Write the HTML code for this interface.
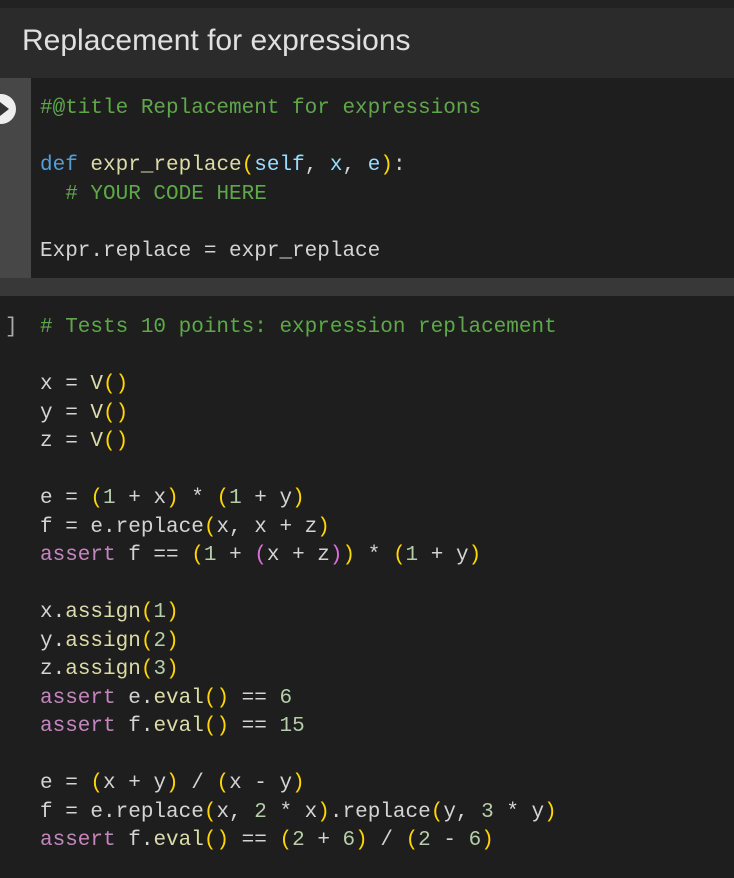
<!DOCTYPE html>
<html><head><meta charset="utf-8"><style>
body{margin:0;width:734px;height:878px;background:#1e1e1e;overflow:hidden;position:relative;font-family:"Liberation Mono",monospace}
.top{position:absolute;left:0;top:0;width:734px;height:8px;background:#222}
.title{position:absolute;left:0;top:8px;width:734px;height:70px;background:#2b2b2b;color:#e0e0e0;font-family:"Liberation Sans",sans-serif;font-size:30px;}
.title span{position:absolute;left:22px;top:16px}
.gut{position:absolute;left:0;top:78px;width:31px;height:200px;background:#474747}
.run{position:absolute;left:-14px;top:94px;width:30px;height:30px;border-radius:50%;background:#eee}
.run:after{content:"";position:absolute;left:14px;top:8px;border-left:9px solid #333;border-top:7px solid transparent;border-bottom:7px solid transparent}
.c1{position:absolute;left:31px;top:78px;width:703px;height:200px;background:#1e1e1e}
.band{position:absolute;left:0;top:278px;width:734px;height:18px;background:#383838}
pre{position:absolute;margin:0;font-family:"Liberation Mono",monospace;font-size:21px;line-height:28.5px;color:#d4d4d4}
.cm{color:#5ea84a}.kw{color:#569cd6}.fn{color:#dcdcaa}.pa{color:#9cdcfe}.p{color:#ffd700}.n{color:#b5cea8}.as{color:#c586c0}.p2{color:#da70d6}
.br{position:absolute;left:5px;top:314px;color:#aaa;font-size:21px;line-height:28.5px}
</style></head><body>
<div class="top"></div>
<div class="title"><span>Replacement for expressions</span></div>
<div class="gut"></div>
<div class="c1"></div>
<div class="run"></div>
<pre style="left:40px;top:95px"><span class="cm">#@title Replacement for expressions</span>

<span class="kw">def</span> <span class="fn">expr_replace</span><span class="p">(</span><span class="pa">self</span>, <span class="pa">x</span>, <span class="pa">e</span><span class="p">)</span>:
  <span class="cm"># YOUR CODE HERE</span>

Expr.replace = expr_replace</pre>
<div class="band"></div>
<div class="br">]</div>
<pre style="left:40px;top:314px"><span class="cm"># Tests 10 points: expression replacement</span>

x = <span class="fn">V</span><span class="p">()</span>
y = <span class="fn">V</span><span class="p">()</span>
z = <span class="fn">V</span><span class="p">()</span>

e = <span class="p">(</span><span class="n">1</span> + x<span class="p">)</span> * <span class="p">(</span><span class="n">1</span> + y<span class="p">)</span>
f = e.replace<span class="p">(</span>x, x + z<span class="p">)</span>
<span class="as">assert</span> f == <span class="p">(</span><span class="n">1</span> + <span class="p2">(</span>x + z<span class="p2">)</span><span class="p">)</span> * <span class="p">(</span><span class="n">1</span> + y<span class="p">)</span>

x.<span class="fn">assign</span><span class="p">(</span><span class="n">1</span><span class="p">)</span>
y.<span class="fn">assign</span><span class="p">(</span><span class="n">2</span><span class="p">)</span>
z.<span class="fn">assign</span><span class="p">(</span><span class="n">3</span><span class="p">)</span>
<span class="as">assert</span> e.<span class="fn">eval</span><span class="p">()</span> == <span class="n">6</span>
<span class="as">assert</span> f.<span class="fn">eval</span><span class="p">()</span> == <span class="n">15</span>

e = <span class="p">(</span>x + y<span class="p">)</span> / <span class="p">(</span>x - y<span class="p">)</span>
f = e.replace<span class="p">(</span>x, <span class="n">2</span> * x<span class="p">)</span>.replace<span class="p">(</span>y, <span class="n">3</span> * y<span class="p">)</span>
<span class="as">assert</span> f.<span class="fn">eval</span><span class="p">()</span> == <span class="p">(</span><span class="n">2</span> + <span class="n">6</span><span class="p">)</span> / <span class="p">(</span><span class="n">2</span> - <span class="n">6</span><span class="p">)</span></pre>
</body></html>
